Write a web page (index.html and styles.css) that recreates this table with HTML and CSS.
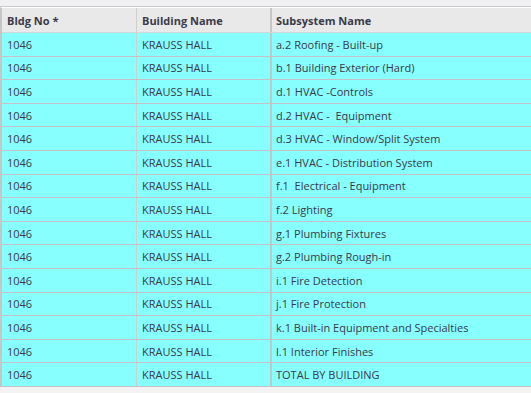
FILE: index.html
```html
<!DOCTYPE html>
<html>
<head>
<meta charset="utf-8">
<link rel="stylesheet" href="styles.css">
</head>
<body>
<div class="topstrip"></div>
<div class="grid">
  <div class="row head">
    <div class="cell c1">Bldg No *</div>
    <div class="cell c2">Building Name</div>
    <div class="cell c3">Subsystem Name</div>
  </div>
  <div class="row"><div class="cell c1">1046</div><div class="cell c2">KRAUSS HALL</div><div class="cell c3">a.2 Roofing - Built-up</div></div>
  <div class="row"><div class="cell c1">1046</div><div class="cell c2">KRAUSS HALL</div><div class="cell c3">b.1 Building Exterior (Hard)</div></div>
  <div class="row"><div class="cell c1">1046</div><div class="cell c2">KRAUSS HALL</div><div class="cell c3">d.1 HVAC -Controls</div></div>
  <div class="row"><div class="cell c1">1046</div><div class="cell c2">KRAUSS HALL</div><div class="cell c3">d.2 HVAC -&nbsp; Equipment</div></div>
  <div class="row"><div class="cell c1">1046</div><div class="cell c2">KRAUSS HALL</div><div class="cell c3">d.3 HVAC - Window/Split System</div></div>
  <div class="row"><div class="cell c1">1046</div><div class="cell c2">KRAUSS HALL</div><div class="cell c3">e.1 HVAC - Distribution System</div></div>
  <div class="row"><div class="cell c1">1046</div><div class="cell c2">KRAUSS HALL</div><div class="cell c3">f.1&nbsp; Electrical - Equipment</div></div>
  <div class="row"><div class="cell c1">1046</div><div class="cell c2">KRAUSS HALL</div><div class="cell c3">f.2 Lighting</div></div>
  <div class="row"><div class="cell c1">1046</div><div class="cell c2">KRAUSS HALL</div><div class="cell c3">g.1 Plumbing Fixtures</div></div>
  <div class="row"><div class="cell c1">1046</div><div class="cell c2">KRAUSS HALL</div><div class="cell c3">g.2 Plumbing Rough-in</div></div>
  <div class="row"><div class="cell c1">1046</div><div class="cell c2">KRAUSS HALL</div><div class="cell c3">i.1 Fire Detection</div></div>
  <div class="row"><div class="cell c1">1046</div><div class="cell c2">KRAUSS HALL</div><div class="cell c3">j.1 Fire Protection</div></div>
  <div class="row"><div class="cell c1">1046</div><div class="cell c2">KRAUSS HALL</div><div class="cell c3">k.1 Built-in Equipment and Specialties</div></div>
  <div class="row"><div class="cell c1">1046</div><div class="cell c2">KRAUSS HALL</div><div class="cell c3">l.1 Interior Finishes</div></div>
  <div class="row"><div class="cell c1">1046</div><div class="cell c2">KRAUSS HALL</div><div class="cell c3">TOTAL BY BUILDING</div></div>
</div>
</body>
</html>
```

FILE: styles.css
```css
html, body {
  margin: 0;
  padding: 0;
  background: #f3f3f3;
  width: 531px;
  height: 393px;
  overflow: hidden;
}
body {
  font-family: "Open Sans", "Noto Sans", sans-serif;
  font-size: 11px;
  color: #3a3848;
}
.topstrip {
  height: 6px;
  background: #f0f0f2;
  border-bottom: 1px solid #c9c9cc;
}
.grid {
  border-left: 2px solid #c6c6c6;
  border-top: 1px solid #ffffff;
}
.row {
  display: grid;
  grid-template-columns: 135px 135px 1fr;
  height: 23.6px;
  box-sizing: border-box;
  border-bottom: 1px solid #c8c2c8;
  background: #88ffff;
}
.row.head {
  height: 25px;
  background: #e9e9e9;
  border-bottom: 1px solid #d6d6d6;
  font-weight: 700;
  color: #3a3a4a;
}
.cell {
  display: flex;
  align-items: center;
  padding-left: 5px;
  box-sizing: border-box;
  white-space: nowrap;
  overflow: hidden;
}
.c1 {
  border-right: 1px solid #cfcfcf;
}
.c2 {
  border-right: 2px solid #c6c6c6;
}
.c3 { padding-left: 4px; }
```
